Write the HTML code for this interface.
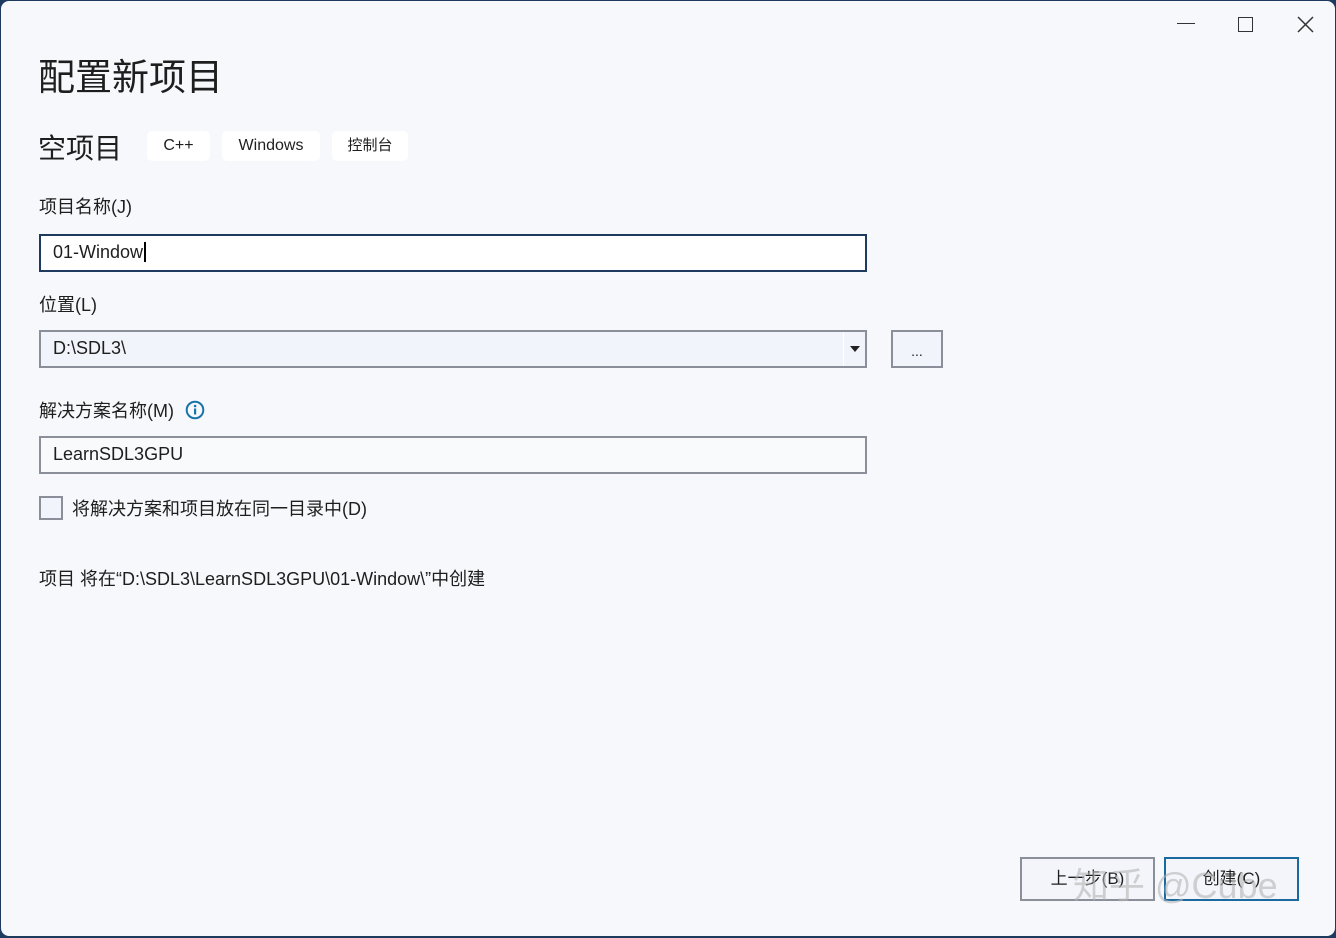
<!DOCTYPE html>
<html><head><meta charset="utf-8"><style>
*{box-sizing:border-box;margin:0;padding:0}
body{width:1336px;height:938px;background:#1f3a5f;font-family:"Liberation Sans","Noto Sans CJK SC",sans-serif;color:#1e1e1e;position:relative;overflow:hidden}
.win{position:absolute;left:1px;top:1px;width:1334px;height:935px;background:#f7f8fc;border-radius:8px}
.a{position:absolute;white-space:nowrap}
.tag{position:absolute;top:130px;height:30px;background:#fff;border-radius:5px;font-size:16px;line-height:30px;text-align:center}
.inp{position:absolute;left:38px;width:828px;height:38px;border:2px solid #8a8f9a;background:#f9fafc;font-size:18px;line-height:33px;padding-left:12px}
.btn{position:absolute;top:856px;height:44px;border:2px solid #8a8f9a;background:#f3f5fa;font-size:17px;line-height:40px;text-align:center}
.lbl{font-size:18px;color:#1e1e1e}
</style></head><body>
<div class="win">
<div class="a" style="left:1176px;top:22px;width:18px;border-top:1.5px solid #333"></div>
<div class="a" style="left:1237px;top:16px;width:15px;height:15px;border:1.5px solid #333"></div>
<svg class="a" style="left:1296px;top:15px" width="17" height="17"><path d="M1 1L16 16M16 1L1 16" stroke="#333" stroke-width="1.5"/></svg>
<div class="a" style="left:37px;top:46px;font-size:37px">配置新项目</div>
<div class="a" style="left:37px;top:126px;font-size:28px">空项目</div>
<div class="tag" style="left:146px;width:63px">C++</div>
<div class="tag" style="left:221px;width:98px">Windows</div>
<div class="tag" style="left:331px;width:76px;font-size:15px">控制台</div>
<div class="a lbl" style="left:38px;top:192px">项目名称(J)</div>
<div class="inp" style="top:233px;border-color:#1f3a5f;background:#fff">01-Window<span style="border-left:2px solid #000;margin-left:1px"></span></div>
<div class="a lbl" style="left:38px;top:290px">位置(L)</div>
<div class="inp" style="top:329px;background:#f1f4fa">D:\SDL3\</div>
<div class="a" style="left:842px;top:331px;width:1px;height:34px;background:#fff"></div>
<svg class="a" style="left:849px;top:345px" width="10" height="6"><path d="M0 0H10L5 6Z" fill="#222"/></svg>
<div class="a" style="left:890px;top:329px;width:52px;height:38px;border:2px solid #8a8f9a;background:#f1f4fa;text-align:center;font-size:14px;line-height:38px">...</div>
<div class="a lbl" style="left:38px;top:396px">解决方案名称(M)</div>
<svg class="a" style="left:184px;top:399px" width="20" height="20"><circle cx="10" cy="10" r="8.3" fill="none" stroke="#1a73a8" stroke-width="2"/><rect x="9" y="8.5" width="2.2" height="6" fill="#1a73a8"/><circle cx="10.1" cy="6" r="1.3" fill="#1a73a8"/></svg>
<div class="inp" style="top:435px">LearnSDL3GPU</div>
<div class="a" style="left:38px;top:495px;width:24px;height:24px;border:2px solid #8a8f9a;background:#f1f4fa"></div>
<div class="a lbl" style="left:71px;top:494px">将解决方案和项目放在同一目录中(D)</div>
<div class="a lbl" style="left:38px;top:564px">项目 将在“D:\SDL3\LearnSDL3GPU\01-Window\”中创建</div>
<div class="btn" style="left:1019px;width:135px">上一步(B)</div>
<div class="btn" style="left:1163px;width:135px;border-color:#1a6aa0">创建(C)</div>
<div class="a" style="left:1072px;top:856px;font-size:36px;color:rgba(180,180,180,0.6)">知乎 @Cube</div>
</div>
</body></html>
